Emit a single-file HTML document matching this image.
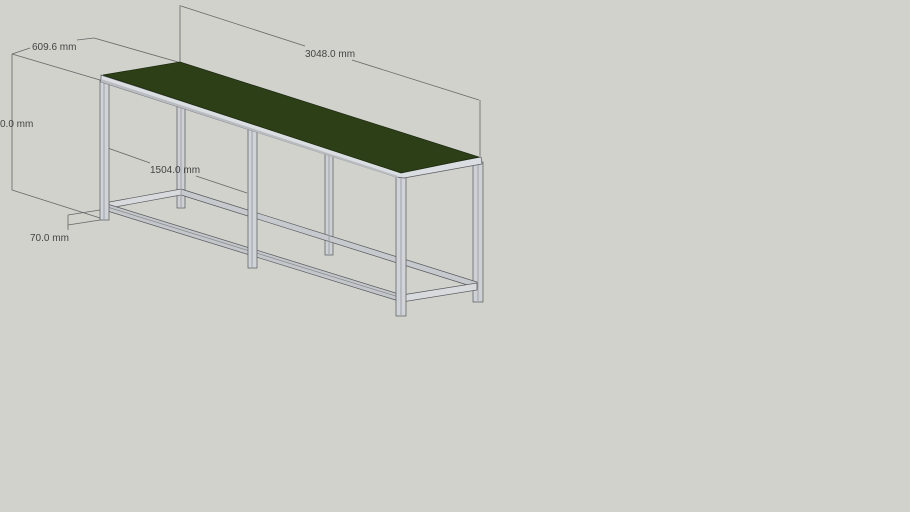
<!DOCTYPE html>
<html><head><meta charset="utf-8"><style>
html,body{margin:0;padding:0;background:#d1d2cc;}
svg{display:block}
text{font-family:"Liberation Sans",sans-serif;font-size:10px;fill:#444;}
</style></head><body>
<svg width="910" height="512" viewBox="0 0 910 512" xmlns="http://www.w3.org/2000/svg">
<rect width="910" height="512" fill="#d1d2cc"/>
<g stroke="#666" stroke-width="0.8" fill="none">
<line x1="180" y1="5" x2="180" y2="62"/>
<line x1="480" y1="100" x2="480" y2="156"/>
<line x1="181" y1="6" x2="305" y2="46"/>
<line x1="352" y1="60" x2="479" y2="100"/>
<line x1="12" y1="54" x2="30" y2="48"/>
<line x1="77" y1="40" x2="94" y2="38"/>
<line x1="94" y1="38" x2="178" y2="62"/>
<line x1="12" y1="54" x2="100" y2="80"/>
<line x1="12" y1="54" x2="12" y2="190"/>
<line x1="12" y1="190" x2="100" y2="218"/>
<line x1="102" y1="146" x2="150" y2="163"/>
<line x1="196" y1="176" x2="247" y2="193"/>
<line x1="68" y1="215" x2="100" y2="210"/>
<line x1="68" y1="225" x2="100" y2="220"/>
<line x1="68" y1="215" x2="68" y2="230"/>
</g>
<g stroke="#55575b" stroke-width="0.7">
<rect x="177" y="66" width="8" height="142" fill="#cdd0d4"/>
<rect x="325" y="153" width="8" height="102" fill="#cdd0d4"/>
<rect x="473" y="162" width="10" height="140" fill="#cdd0d4"/>
<polygon points="181,189 477,282 477,288 181,195" fill="#c6c9cd"/>
<polygon points="104,203 181,189 181,195 104,209" fill="#d8dade"/>
<polygon points="402,295 477,283 477,290 402,302" fill="#d8dade"/>
<polygon points="104,203 402,295 402,302 104,210" fill="#c3c6ca"/>
<line x1="104" y1="206" x2="402" y2="298" stroke="#888"/>
<rect x="100" y="80" width="9" height="140" fill="#d0d3d7"/>
<rect x="248" y="128" width="9" height="140" fill="#d0d3d7"/>
<rect x="396" y="176" width="10" height="140" fill="#d0d3d7"/>
</g>
<g stroke="#9ea2a8" stroke-width="1">
<line x1="104" y1="82" x2="104" y2="219"/>
<line x1="181" y1="68" x2="181" y2="207"/>
<line x1="252" y1="130" x2="252" y2="267"/>
<line x1="329" y1="155" x2="329" y2="254"/>
<line x1="401" y1="178" x2="401" y2="315"/>
<line x1="478" y1="164" x2="478" y2="301"/>
</g>
<polygon points="101,75 400,172 481,157 482,164 404,178 396,177 101,82" fill="#dadde1" stroke="#55575b" stroke-width="0.7"/>
<polygon points="101,79 398,176 398,178 101,82" fill="#b8bbc0"/>
<polygon points="103,75 180,62 479,157 401,173" fill="#2c3f17" stroke="#1c2810" stroke-width="0.7"/>
<text x="32" y="50">609.6 mm</text>
<text x="305" y="57">3048.0 mm</text>
<text x="0" y="127">0.0 mm</text>
<text x="150" y="173">1504.0 mm</text>
<text x="30" y="241">70.0 mm</text>
</svg>
</body></html>
